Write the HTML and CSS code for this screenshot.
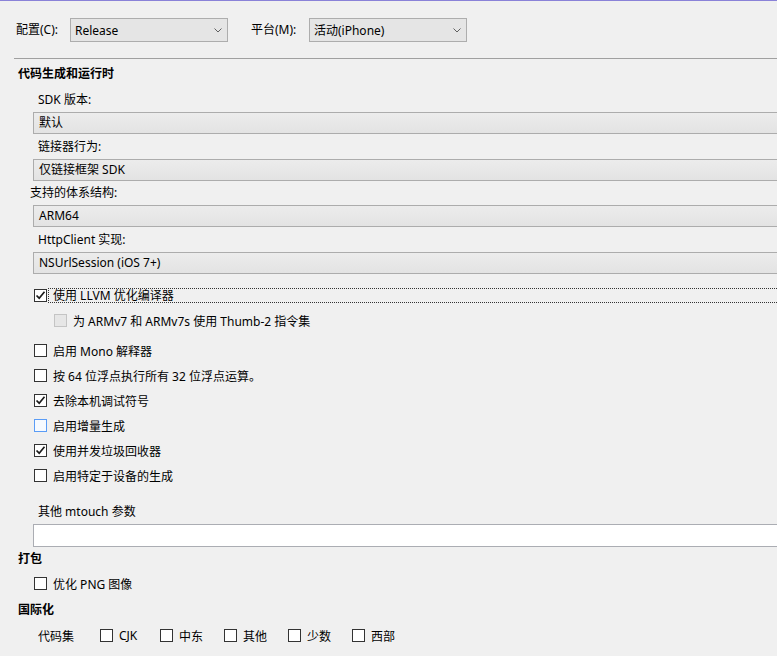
FILE: index.html
```html
<!DOCTYPE html>
<html lang="zh-CN">
<head>
<meta charset="utf-8">
<title>iOS 生成</title>
<link rel="stylesheet" href="styles.css">
</head>
<body>
<div class="page">
  <div class="toolbar">
    <span class="tb-label tb-config">配置(C):</span>
    <div class="combo-top"><span>Release</span><svg class="chev" width="8" height="5" viewBox="0 0 8 5"><path d="M0.5 0.5 L4 4 L7.5 0.5" fill="none" stroke="#606060" stroke-width="1"/></svg></div>
    <span class="tb-label tb-platform">平台(M):</span>
    <div class="combo-top"><span>活动(iPhone)</span><svg class="chev" width="8" height="5" viewBox="0 0 8 5"><path d="M0.5 0.5 L4 4 L7.5 0.5" fill="none" stroke="#606060" stroke-width="1"/></svg></div>
  </div>
  <div class="separator"></div>

  <h2 class="group-title first">代码生成和运行时</h2>
  <div class="field-label sdk">SDK 版本:</div>
  <div class="combo-wide">默认</div>
  <div class="field-label">链接器行为:</div>
  <div class="combo-wide">仅链接框架 SDK</div>
  <div class="field-label arch">支持的体系结构:</div>
  <div class="combo-wide">ARM64</div>
  <div class="field-label">HttpClient 实现:</div>
  <div class="combo-wide">NSUrlSession (iOS 7+)</div>

  <div class="check-row llvm">
    <span class="box"><svg width="11" height="11" viewBox="0 0 11 11"><path d="M1.5 5.5 L4.2 8.2 L9.5 1.8" fill="none" stroke="#1a1a1a" stroke-width="1.7"/></svg></span>
    <span class="focus-label">使用 LLVM 优化编译器</span>
  </div>
  <div class="check-row sub">
    <span class="box disabled"></span><span>为 ARMv7 和 ARMv7s 使用 Thumb-2 指令集</span>
  </div>
  <div class="check-row gap-top">
    <span class="box"></span><span>启用 Mono 解释器</span>
  </div>
  <div class="check-row">
    <span class="box"></span><span>按 64 位浮点执行所有 32 位浮点运算。</span>
  </div>
  <div class="check-row">
    <span class="box"><svg width="11" height="11" viewBox="0 0 11 11"><path d="M1.5 5.5 L4.2 8.2 L9.5 1.8" fill="none" stroke="#1a1a1a" stroke-width="1.7"/></svg></span><span>去除本机调试符号</span>
  </div>
  <div class="check-row">
    <span class="box hover"></span><span>启用增量生成</span>
  </div>
  <div class="check-row">
    <span class="box"><svg width="11" height="11" viewBox="0 0 11 11"><path d="M1.5 5.5 L4.2 8.2 L9.5 1.8" fill="none" stroke="#1a1a1a" stroke-width="1.7"/></svg></span><span>使用并发垃圾回收器</span>
  </div>
  <div class="check-row">
    <span class="box"></span><span>启用特定于设备的生成</span>
  </div>

  <div class="field-label mtouch">其他 mtouch 参数</div>
  <div class="text-input"></div>

  <h2 class="group-title">打包</h2>
  <div class="check-row">
    <span class="box"></span><span>优化 PNG 图像</span>
  </div>

  <h2 class="group-title intl">国际化</h2>
  <div class="codeset-row">
    <span>代码集</span>
    <span class="cs-item"><span class="box"></span><span>CJK</span></span>
    <span class="cs-item"><span class="box"></span><span>中东</span></span>
    <span class="cs-item"><span class="box"></span><span>其他</span></span>
    <span class="cs-item"><span class="box"></span><span>少数</span></span>
    <span class="cs-item"><span class="box"></span><span>西部</span></span>
  </div>
</div>
</body>
</html>
```

FILE: styles.css
```css
html, body {
  margin: 0;
  padding: 0;
}
body {
  background: #f0f0f0;
  font-family: "Noto Sans", "Noto Sans CJK SC", sans-serif;
  font-size: 12px;
  color: #000;
  overflow: hidden;
  width: 777px;
  height: 656px;
}
.page {
  border-top: 1px solid #8a82d8;
  width: 777px;
  height: 655px;
  overflow: hidden;
}
.toolbar {
  display: flex;
  align-items: center;
  padding: 17px 0 0 16px;
  height: 24px;
}
.tb-label {
  line-height: 24px;
  white-space: nowrap;
}
.tb-config {
  width: 54px;
}
.tb-platform {
  width: 58px;
  margin-left: 23px;
}
.combo-top {
  width: 158px;
  height: 24px;
  box-sizing: border-box;
  border: 1px solid #adadad;
  background: #e5e5e5;
  display: flex;
  align-items: center;
  justify-content: space-between;
  padding: 0 5px 0 4px;
}
.chev {
  display: block;
}
.separator {
  margin: 16px 0 0 14px;
  height: 1px;
  background: #a0a0a0;
}
.group-title {
  margin: 0 0 0 18px;
  font-size: 12px;
  font-weight: bold;
  line-height: 24px;
}
.group-title.first {
  margin-top: 3px;
}
.group-title.intl {
  margin-top: 2px;
}
.field-label {
  line-height: 25px;
  height: 25px;
  padding-left: 38px;
}
.field-label.sdk {
  margin-top: 1px;
}
.field-label.arch {
  padding-left: 30px;
  line-height: 24px;
  height: 24px;
}
.field-label.mtouch {
  margin-top: 11px;
}
.combo-wide {
  margin-left: 33px;
  margin-right: -30px;
  height: 22px;
  box-sizing: border-box;
  border: 1px solid #acacac;
  background: linear-gradient(#ececec, #e3e3e3);
  padding-left: 5px;
  line-height: 20px;
}
.check-row {
  display: flex;
  align-items: center;
  height: 25px;
  padding-left: 34px;
}
.check-row.llvm {
  margin-top: 9px;
  margin-right: -30px;
}
.check-row.sub {
  padding-left: 54px;
}
.check-row.gap-top {
  margin-top: 5px;
}
.box {
  width: 13px;
  height: 13px;
  box-sizing: border-box;
  border: 1px solid #333;
  background: #fff;
  margin-right: 6px;
  flex: none;
  display: flex;
  align-items: center;
  justify-content: center;
}
.box svg {
  display: block;
}
.box.disabled {
  border-color: #c4c4c4;
  background: #e6e6e6;
}
.box.hover {
  border-color: #5a9cf6;
  background: #f6faff;
}
.check-row.llvm .box {
  margin-right: 1px;
}
.focus-label {
  flex: 1;
  height: 15px;
  box-sizing: border-box;
  border: 1px dotted #333;
  padding-left: 4px;
  line-height: 13px;
}
.text-input {
  margin-left: 33px;
  margin-right: -30px;
  height: 23px;
  box-sizing: border-box;
  border: 1px solid #abadb3;
  background: #fff;
}
.codeset-row {
  display: grid;
  grid-template-columns: 62px 60px 64px 64px 64px auto;
  align-items: center;
  height: 25px;
  margin-top: 1px;
  padding-left: 38px;
}
.cs-item {
  display: flex;
  align-items: center;
}
```
